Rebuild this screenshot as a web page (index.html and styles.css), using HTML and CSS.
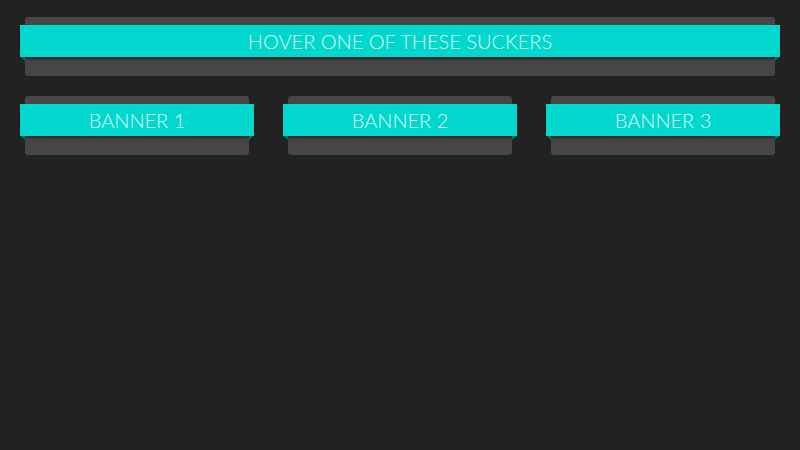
FILE: index.html
```html
<!DOCTYPE html>
<html lang="en">

<head>
    <meta charset="UTF-8">
    <meta name="viewport" content="width=device-width, initial-scale=1.0">
    <title>Ribbon Banners</title>
    <link rel="stylesheet" href="styles.css">
</head>

<body>
    <main class="wrap">
        <div class="card">
            <div class="ribbon">HOVER ONE OF THESE SUCKERS</div>
        </div>

        <div class="row">
            <div class="card">
                <div class="ribbon">BANNER 1</div>
            </div>
            <div class="card">
                <div class="ribbon">BANNER 2</div>
            </div>
            <div class="card">
                <div class="ribbon">BANNER 3</div>
            </div>
        </div>
    </main>
</body>

</html>
```

FILE: styles.css
```css
/* General Styles */
body {
    margin: 0;
    padding: 0;
    background-color: #222;
    font-family: "Lato Light", Lato, "Open Sans", sans-serif;
}

.wrap {
    padding: 17px 25px;
    display: flex;
    flex-direction: column;
    gap: 20px;
}

.row {
    display: grid;
    grid-template-columns: repeat(3, 1fr);
    gap: 39px;
}

/* Grey card behind each ribbon */
.card {
    background-color: #464646;
    border-radius: 3px;
    height: 59px;
    padding-top: 8px;
    box-sizing: border-box;
}

/* Ribbon sticks out 5px on both sides */
.ribbon {
    position: relative;
    margin: 0 -5px;
    height: 32px;
    line-height: 33px;
    background-color: #02d7cd;
    color: #dcfbf8;
    font-size: 20px;
    font-weight: 300;
    text-align: center;
    box-shadow: 0 2px 2px rgba(0, 0, 0, 0.45);
}

/* Folded corners */
.ribbon::before,
.ribbon::after {
    content: "";
    position: absolute;
    top: 100%;
    border-style: solid;
}

.ribbon::before {
    left: 0;
    border-width: 0 5px 4px 0;
    border-color: transparent #0a6a66 transparent transparent;
}

.ribbon::after {
    right: 0;
    border-width: 0 0 4px 5px;
    border-color: transparent transparent transparent #0a6a66;
}
```
